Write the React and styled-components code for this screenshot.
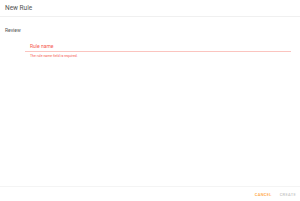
import React from 'react'
import styled, { createGlobalStyle } from 'styled-components'

const Global = createGlobalStyle`
  html, body { margin:0; padding:0; background:#fff; }
  body { font-family: Roboto, "Liberation Sans", sans-serif; }
`

const App = () => {
  return (
    <>
      <Global />
      <Page>
        <Header>New Rule</Header>
        <Body>
          <Section>Review</Section>
          <Field>
            <Label>Rule name</Label>
            <Underline />
            <Error>The rule name field is required.</Error>
          </Field>
        </Body>
        <Footer>
          <Button color='#ffa033'>Cancel</Button>
          <Button color='#c4c4c4'>Create</Button>
        </Footer>
      </Page>
    </>
  )
}

const Page = styled.div`
  width:300px;
  height:201px;
  display:flex;
  flex-direction:column;
  box-sizing:border-box;
`

const Header = styled.div`
  height:17px;
  box-sizing:border-box;
  padding:4px 5px 0;
  font-size:6.5px;
  color:#555;
  border-bottom:1px solid #f0f0f0;
`

const Body = styled.div`
  flex:1;
  padding:10px 5px 0;
`

const Section = styled.div`
  font-size:5px;
  color:#555;
`

const Field = styled.div`
  margin:9px 4px 0 20px;
`

const Label = styled.div`
  font-size:5px;
  color:#f55a4e;
  padding-left:5px;
  line-height:8px;
`

const Underline = styled.div`
  height:1px;
  background:#fbc4bf;
  margin-top:0.5px;
`

const Error = styled.div`
  font-size:3.5px;
  color:#f55a4e;
  margin-top:2px;
  padding-left:5px;
`

const Footer = styled.div`
  height:14px;
  border-top:1px solid #f4f4f4;
  display:flex;
  justify-content:flex-end;
  align-items:center;
  gap:8px;
  padding:0 4px 0 0;
`

const Button = styled.div`
  font-size:4px;
  font-weight:500;
  letter-spacing:0.3px;
  text-transform:uppercase;
  color:${p => p.color};
`

export default App
